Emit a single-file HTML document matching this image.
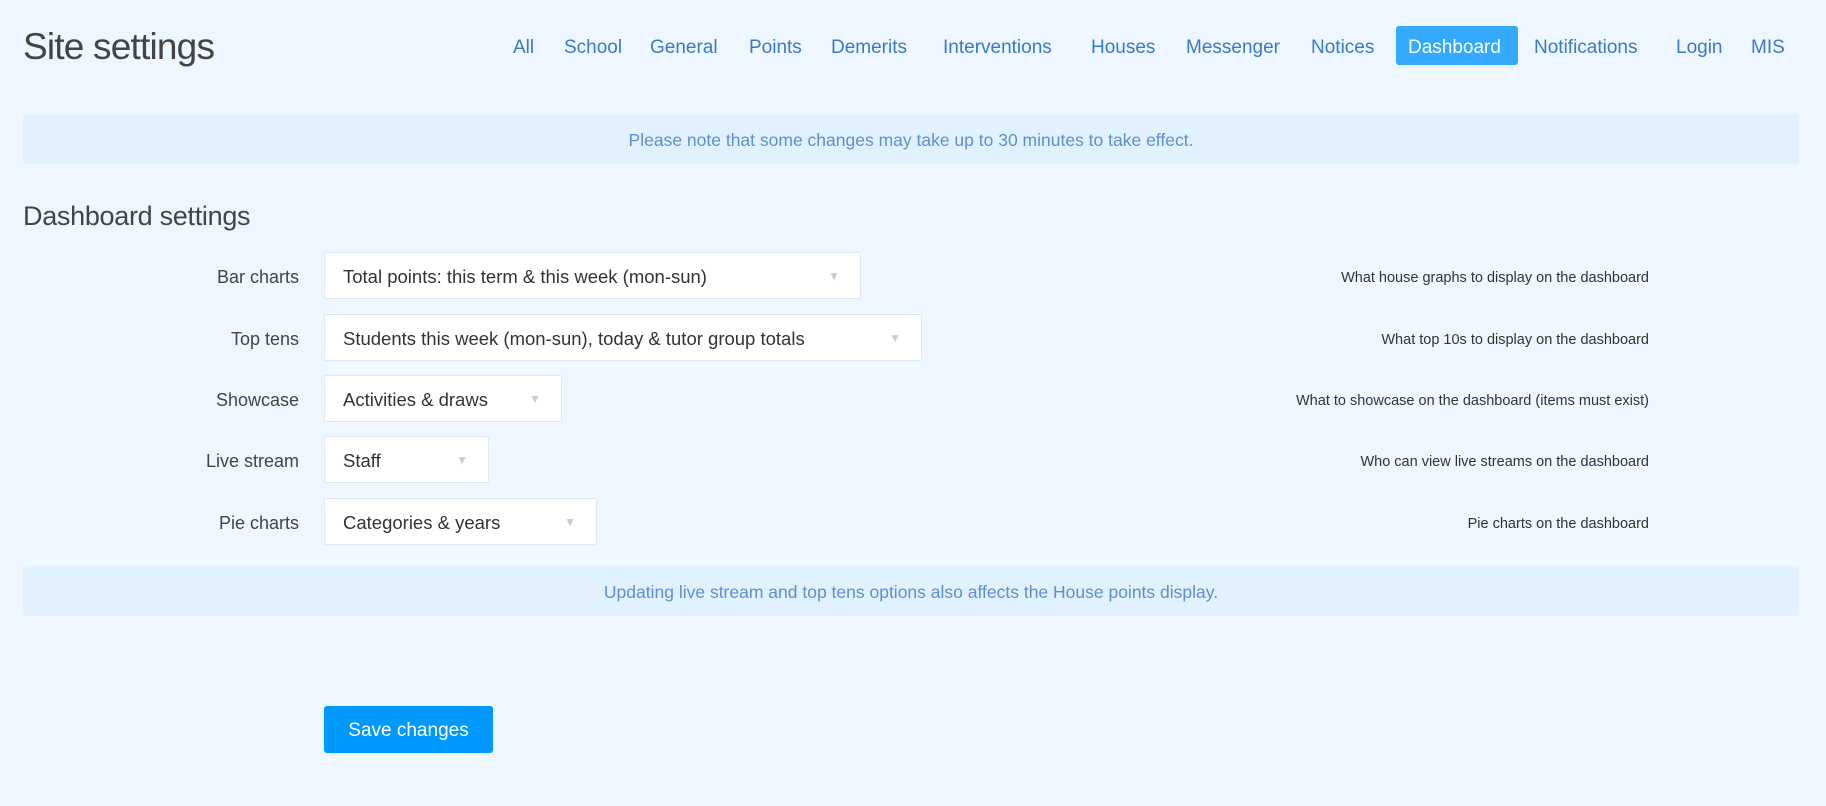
<!DOCTYPE html>
<html><head><meta charset="utf-8"><style>
*{box-sizing:border-box;margin:0;padding:0}
body{width:1826px;height:806px;background:#eef7ff;font-family:"Liberation Sans",sans-serif;position:relative;overflow:hidden;color:#333}
.a{position:absolute;white-space:nowrap}
h1{position:absolute;left:23px;top:26px;font-size:37px;font-weight:normal;color:#444;letter-spacing:-0.8px}
.nav{top:37px;font-size:19px;color:#3a78c8}
.pill{position:absolute;left:1396px;top:26px;width:122px;height:39px;background:#33aaff;border-radius:3px}
.ban{position:absolute;left:23px;width:1776px;height:50px;background:#e2f1fe;border-radius:3px;color:#5c8fd0;font-size:17.5px;text-align:center;line-height:52px}
h2{position:absolute;left:23px;top:201px;font-size:27px;font-weight:normal;color:#444;letter-spacing:-0.3px}
.lab{right:1527px;font-size:18px;color:#444}
.sel{position:absolute;left:324px;height:47px;background:#fff;border:1px solid #dfe8f0;border-radius:2px;font-size:18.5px;color:#333;line-height:48px;padding-left:18px}
.sel span{position:absolute;right:20px;top:-1px;color:#ccc;font-size:12px}
.help{right:177px;font-size:14.5px;color:#333}
.btn{position:absolute;left:324px;top:706px;width:169px;height:47px;background:#0099ff;border-radius:3px;color:#fff;font-size:19px;text-align:center;line-height:49px}
</style></head><body>
<h1>Site settings</h1>
<div class="pill"></div>
<div class="a nav" style="left:513px">All</div>
<div class="a nav" style="left:564px">School</div>
<div class="a nav" style="left:650px">General</div>
<div class="a nav" style="left:749px">Points</div>
<div class="a nav" style="left:831px">Demerits</div>
<div class="a nav" style="left:943px">Interventions</div>
<div class="a nav" style="left:1091px">Houses</div>
<div class="a nav" style="left:1186px">Messenger</div>
<div class="a nav" style="left:1311px">Notices</div>
<div class="a nav" style="left:1408px;color:#fff">Dashboard</div>
<div class="a nav" style="left:1534px">Notifications</div>
<div class="a nav" style="left:1676px">Login</div>
<div class="a nav" style="left:1751px">MIS</div>
<div class="ban" style="top:114px">Please note that some changes may take up to 30 minutes to take effect.</div>
<h2>Dashboard settings</h2>

<div class="a lab" style="top:267px">Bar charts</div>
<div class="sel" style="top:252px;width:537px">Total points: this term &amp; this week (mon-sun)<span>▼</span></div>
<div class="a help" style="top:270px">What house graphs to display on the dashboard</div>

<div class="a lab" style="top:329px">Top tens</div>
<div class="sel" style="top:314px;width:598px">Students this week (mon-sun), today &amp; tutor group totals<span>▼</span></div>
<div class="a help" style="top:332px">What top 10s to display on the dashboard</div>

<div class="a lab" style="top:390px">Showcase</div>
<div class="sel" style="top:375px;width:238px">Activities &amp; draws<span>▼</span></div>
<div class="a help" style="top:393px">What to showcase on the dashboard (items must exist)</div>

<div class="a lab" style="top:451px">Live stream</div>
<div class="sel" style="top:436px;width:165px">Staff<span>▼</span></div>
<div class="a help" style="top:454px">Who can view live streams on the dashboard</div>

<div class="a lab" style="top:513px">Pie charts</div>
<div class="sel" style="top:498px;width:273px">Categories &amp; years<span>▼</span></div>
<div class="a help" style="top:516px">Pie charts on the dashboard</div>

<div class="ban" style="top:566px">Updating live stream and top tens options also affects the House points display.</div>
<div class="btn">Save changes</div>
</body></html>
